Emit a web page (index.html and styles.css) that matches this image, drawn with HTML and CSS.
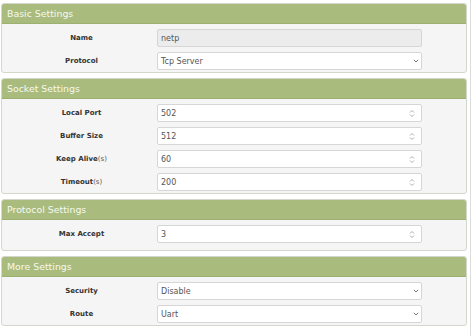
FILE: index.html
```html
<!DOCTYPE html>
<html>
<head>
<meta charset="utf-8">
<link rel="stylesheet" href="styles.css">
</head>
<body>
<div class="page">
  <section class="panel">
    <div class="panel-head">Basic Settings</div>
    <div class="panel-body">
      <div class="row"><div class="label">Name</div><div class="field disabled"><span>netp</span></div></div>
      <div class="row"><div class="label">Protocol</div><div class="field"><span>Tcp Server</span><svg class="chev" width="6" height="4" viewBox="0 0 6 4"><path d="M0.8 0.8 L3 3 L5.2 0.8" fill="none" stroke="#666" stroke-width="0.9"/></svg></div></div>
    </div>
  </section>
  <section class="panel">
    <div class="panel-head">Socket Settings</div>
    <div class="panel-body">
      <div class="row"><div class="label">Local Port</div><div class="field"><span>502</span><svg class="spin" width="6" height="9" viewBox="0 0 6 9"><path d="M1 3.5 L3 1.5 L5 3.5 M1 5.5 L3 7.5 L5 5.5" fill="none" stroke="#999" stroke-width="0.8"/></svg></div></div>
      <div class="row"><div class="label">Buffer Size</div><div class="field"><span>512</span><svg class="spin" width="6" height="9" viewBox="0 0 6 9"><path d="M1 3.5 L3 1.5 L5 3.5 M1 5.5 L3 7.5 L5 5.5" fill="none" stroke="#999" stroke-width="0.8"/></svg></div></div>
      <div class="row"><div class="label">Keep Alive<span class="unit">(s)</span></div><div class="field"><span>60</span><svg class="spin" width="6" height="9" viewBox="0 0 6 9"><path d="M1 3.5 L3 1.5 L5 3.5 M1 5.5 L3 7.5 L5 5.5" fill="none" stroke="#999" stroke-width="0.8"/></svg></div></div>
      <div class="row"><div class="label">Timeout<span class="unit">(s)</span></div><div class="field"><span>200</span><svg class="spin" width="6" height="9" viewBox="0 0 6 9"><path d="M1 3.5 L3 1.5 L5 3.5 M1 5.5 L3 7.5 L5 5.5" fill="none" stroke="#999" stroke-width="0.8"/></svg></div></div>
    </div>
  </section>
  <section class="panel">
    <div class="panel-head">Protocol Settings</div>
    <div class="panel-body tall">
      <div class="row"><div class="label">Max Accept</div><div class="field"><span>3</span><svg class="spin" width="6" height="9" viewBox="0 0 6 9"><path d="M1 3.5 L3 1.5 L5 3.5 M1 5.5 L3 7.5 L5 5.5" fill="none" stroke="#999" stroke-width="0.8"/></svg></div></div>
    </div>
  </section>
  <section class="panel">
    <div class="panel-head">More Settings</div>
    <div class="panel-body">
      <div class="row"><div class="label">Security</div><div class="field"><span>Disable</span><svg class="chev" width="6" height="4" viewBox="0 0 6 4"><path d="M0.8 0.8 L3 3 L5.2 0.8" fill="none" stroke="#666" stroke-width="0.9"/></svg></div></div>
      <div class="row"><div class="label">Route</div><div class="field"><span>Uart</span><svg class="chev" width="6" height="4" viewBox="0 0 6 4"><path d="M0.8 0.8 L3 3 L5.2 0.8" fill="none" stroke="#666" stroke-width="0.9"/></svg></div></div>
    </div>
  </section>
</div>
</body>
</html>
```
FILE: styles.css
```css
html, body {
  margin: 0;
  padding: 0;
  background: #ffffff;
}
body {
  font-family: "DejaVu Sans", "Liberation Sans", sans-serif;
  width: 474px;
  height: 336px;
  overflow: hidden;
}
.page {
  width: 471px;
  height: 336px;
  box-sizing: border-box;
  border-right: 1px solid #dcdcdc;
  padding: 3px 0 0 1px;
  display: flex;
  flex-direction: column;
  gap: 5px;
}
.panel {
  width: 466px;
  border: 1px solid #d4d8cc;
  border-radius: 3px;
  background: #f5f5f5;
  box-sizing: border-box;
  overflow: hidden;
}
.panel-head {
  height: 19px;
  background: #a9bc7e;
  border-bottom: 1px solid #9cb071;
  color: #f6f8f0;
  font-size: 9.4px;
  line-height: 19px;
  padding-left: 5px;
}
.panel-body {
  padding: 5px 0 2px 0;
  display: flex;
  flex-direction: column;
  gap: 5px;
}
.panel-body.tall {
  padding-bottom: 7px;
}
.row {
  display: flex;
  align-items: center;
}
.label {
  width: 151px;
  padding-left: 4px;
  text-align: center;
  font-size: 7px;
  font-weight: bold;
  color: #333;
}
.unit {
  font-weight: normal;
  color: #555;
}
.field {
  width: 265px;
  height: 18px;
  box-sizing: border-box;
  border: 1px solid #d6d6d6;
  border-radius: 2px;
  background: #ffffff;
  display: flex;
  align-items: center;
  justify-content: space-between;
  padding: 0 3px 0 3px;
  font-size: 8px;
  color: #555;
}
.field.disabled {
  background: #ececec;
}
.spin {
  margin-right: 3px;
}
.chev {
  margin-right: -1px;
}
```
